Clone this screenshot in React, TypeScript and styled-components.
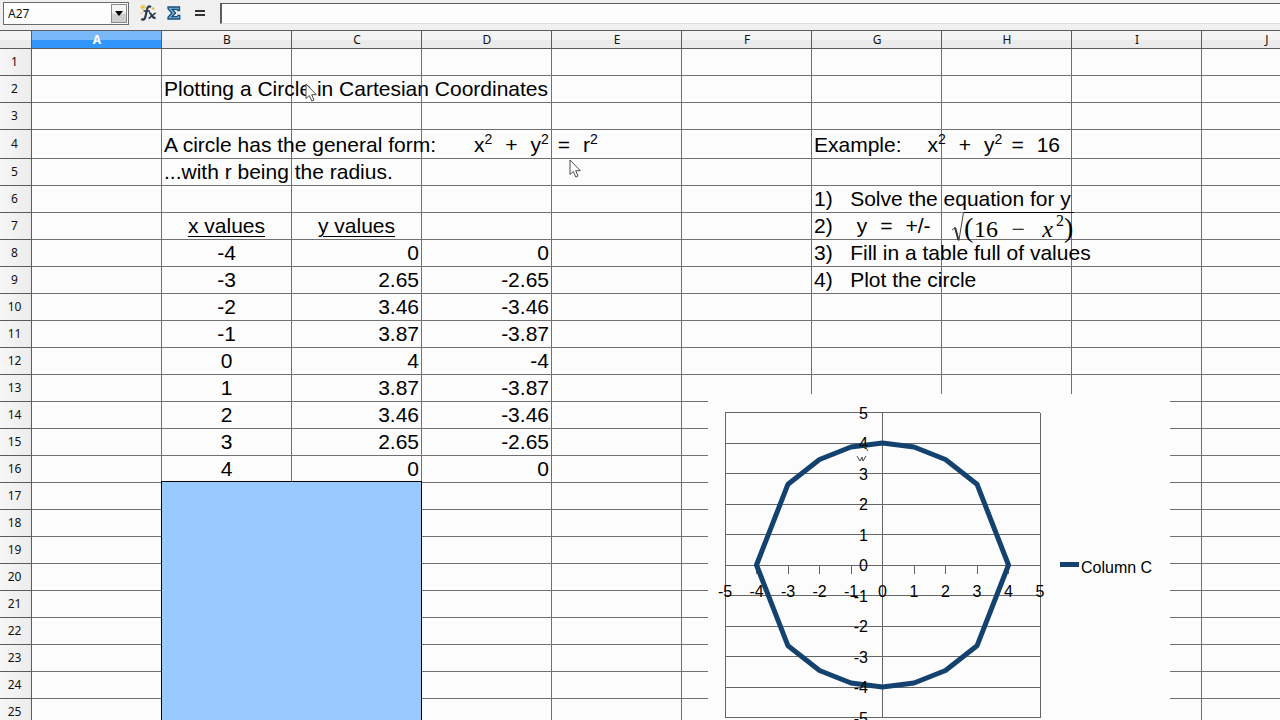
import React from "react";
import styled, { createGlobalStyle, css } from "styled-components";

const GlobalStyle = createGlobalStyle`
  *, *::before, *::after { box-sizing: border-box; }
  body { margin: 0; background: #fcfcfc; }
`;

const UI_FONT = `"Noto Sans", "Open Sans", sans-serif`;
const CELL_FONT = `"Liberation Sans", Arial, sans-serif`;
const FORMULA_FONT = `"Liberation Serif", "Times New Roman", serif`;
const GRID = "#707070";
const EDGE = "#5c5c5c";

const Page = styled.div`
  display: flex;
  flex-direction: column;
  height: 100vh;
  overflow: hidden;
  color: #000;
`;

const FormulaBar = styled.div`
  display: flex;
  align-items: flex-start;
  flex: none;
  height: 31px;
  padding: 2px 0 0 3px;
  background: #f0f0f0;
  border-bottom: 1px solid ${EDGE};
`;

const NameBox = styled.div`
  display: flex;
  width: 126px;
  height: 23px;
  padding: 1px;
  background: #fdfdfd;
  border: 1px solid #6a6a6a;
`;

const NameInput = styled.input`
  flex: 1;
  min-width: 0;
  padding: 0 3px;
  border: 0;
  outline: 0;
  background: transparent;
  font: 12px ${UI_FONT};
  color: #111;
`;

const DropButton = styled.button`
  display: grid;
  place-items: center;
  width: 16px;
  padding: 0;
  border: 1px solid #8a8a8a;
  background: linear-gradient(#f4f4f4 45%, #cfcfcf 55%);
`;

const Tools = styled.div`
  display: flex;
  gap: 6px;
  margin: 1px 0 0 9px;
`;

const ToolButton = styled.button`
  display: grid;
  place-items: center;
  width: 20px;
  height: 20px;
  padding: 0;
  border: 0;
  background: transparent;
`;

const FormulaInput = styled.input`
  flex: 1;
  min-width: 0;
  height: 21px;
  margin: 1px 0 0 10px;
  padding: 0 4px;
  border: solid #5c5c5c;
  border-width: 1px 0 1px 2px;
  border-bottom-color: #dcdcdc;
  outline: 0;
  background: #fdfdfd;
  font: 12px ${UI_FONT};
`;

const Sheet = styled.main`
  position: relative;
  flex: 1;
  min-height: 0;
  overflow: hidden;
  background: #fcfcfc;
`;

const Grid = styled.table`
  width: max(100%, 1332px);
  table-layout: fixed;
  border-collapse: separate;
  border-spacing: 0;
`;

const RowHeaderCol = styled.col`
  width: 32px;
`;

const DataCol = styled.col`
  width: 130px;
`;

const ColumnHeader = styled.th<{ $selected?: boolean }>`
  height: 18px;
  padding: 0 0 0 1px;
  border: solid ${EDGE};
  border-width: 0 1px 1px 0;
  background: linear-gradient(#f4f4f4 55%, #ebebeb 55%);
  font: 12px/16px ${UI_FONT};
  color: #111;
  ${(p) =>
    p.$selected &&
    css`
      background: linear-gradient(#78baf9 55%, #3096fb 55%);
      font-weight: 700;
      color: #fff;
    `}
`;

const RowHeader = styled.th`
  padding: 0 2px 0 0;
  border: solid ${EDGE};
  border-width: 0 1px 1px 0;
  background: linear-gradient(90deg, #f6f6f6, #ececec);
  font: 12px/16px ${UI_FONT};
  color: #111;
`;

const Row = styled.tr<{ $tall?: boolean }>`
  height: ${(p) => (p.$tall ? 29 : 27)}px;
`;

const Cell = styled.td<{ $align?: "left" | "center" | "right"; $underline?: boolean }>`
  padding: 0 2px;
  border: solid ${GRID};
  border-width: 0 1px 1px 0;
  vertical-align: bottom;
  font: 21px/26px ${CELL_FONT};
  text-align: ${(p) => p.$align ?? "left"};
  text-decoration: ${(p) => (p.$underline ? "underline" : "none")};
  text-decoration-thickness: 1px;
  text-underline-offset: 3px;
  white-space: pre;
`;

const Line = styled.div`
  display: flex;
  height: 26px;
`;

const Term = styled.span<{ $lead: number }>`
  padding-left: ${(p) => p.$lead}px;
`;

const Sup = styled.sup`
  position: relative;
  top: -8px;
  vertical-align: baseline;
  font-size: 14px;
  line-height: 0;
`;

const Shape = styled.div`
  position: absolute;
  left: 161px;
  top: 450px;
  width: 261px;
  height: 320px;
  background: #99caff;
  border: 1px solid #000;
`;

const RootFormula = styled.div`
  position: absolute;
  left: 951px;
  top: 181px;
  display: flex;
  height: 36px;
  font: 24px/30px ${FORMULA_FONT};
`;

const Radicand = styled.span`
  display: flex;
  align-items: baseline;
  width: 110px;
  border-top: 1px solid #000;
`;

const FormulaPart = styled.span<{ $width: number; $italic?: boolean }>`
  width: ${(p) => p.$width}px;
  font-style: ${(p) => (p.$italic ? "italic" : "normal")};
`;

const Paren = styled.span`
  width: 10px;
  font-size: 28px;
`;

const Exponent = styled.span`
  align-self: flex-start;
  width: 8px;
  font-size: 16px;
  line-height: 16px;
`;

const ChartFrame = styled.figure`
  position: absolute;
  left: 708px;
  top: 363px;
  width: 462px;
  height: 340px;
  margin: 0;
  background: #fcfcfc;
  font: 16px ${CELL_FONT};
`;

const Pointer = styled.svg<{ $x: number; $y: number }>`
  position: absolute;
  left: ${(p) => p.$x}px;
  top: ${(p) => p.$y}px;
`;

const columns = ["A", "B", "C", "D", "E", "F", "G", "H", "I", "J"];

type TermSpec = { text: string; power?: string; lead?: number };

function Expression({ terms }: { terms: TermSpec[] }) {
  return (
    <Line>
      {terms.map((t, i) => (
        <Term key={i} $lead={t.lead ?? 13}>
          {t.text}
          {t.power && <Sup>{t.power}</Sup>}
        </Term>
      ))}
    </Line>
  );
}

type CellSpec = { content: React.ReactNode; align?: "left" | "center" | "right"; underline?: boolean };

const cells: Record<string, CellSpec> = {
  B2: { content: "Plotting a Circle in Cartesian Coordinates" },
  B4: {
    content: (
      <Expression
        terms={[
          { text: "A circle has the general form:", lead: 0 },
          { text: "x", power: "2", lead: 38 },
          { text: "+" },
          { text: "y", power: "2" },
          { text: "=", lead: 9 },
          { text: "r", power: "2" },
        ]}
      />
    ),
  },
  G4: {
    content: (
      <Expression
        terms={[
          { text: "Example:", lead: 0 },
          { text: "x", power: "2", lead: 26 },
          { text: "+" },
          { text: "y", power: "2" },
          { text: "=", lead: 9 },
          { text: "16" },
        ]}
      />
    ),
  },
  B5: { content: "...with r being the radius." },
  G6: { content: "1)   Solve the equation for y" },
  G7: {
    content: (
      <Expression
        terms={[{ text: "2)", lead: 0 }, { text: "y", lead: 24 }, { text: "=" }, { text: "+/-" }]}
      />
    ),
  },
  G8: { content: "3)   Fill in a table full of values" },
  G9: { content: "4)   Plot the circle" },
  B7: { content: "x values", align: "center", underline: true },
  C7: { content: "y values", align: "center", underline: true },
};

const halfCircle = ["0", "2.65", "3.46", "3.87", "4", "3.87", "3.46", "2.65", "0"];
halfCircle.forEach((y, i) => {
  const row = 8 + i;
  cells[`B${row}`] = { content: String(i - 4), align: "center" };
  cells[`C${row}`] = { content: y, align: "right" };
  cells[`D${row}`] = { content: y === "0" ? y : `-${y}`, align: "right" };
});

const rows = Array.from({ length: 25 }, (_, i) => i + 1);

/* Chart space: the origin sits at (174.5, 171) in the frame. */
const px = (x: number) => 174.5 + x * 31.5;
const py = (y: number) => 171 - y * 30.5;
const units = Array.from({ length: 11 }, (_, i) => i - 5);
const upper = halfCircle.map((y, i) => [i - 4, Number(y)]);
const lower = upper.map(([x, y]) => [x, -y]).reverse();
const outline = [...upper, ...lower].map(([x, y]) => `${px(x)},${py(y)}`).join(" ");

function CircleChart() {
  return (
    <ChartFrame>
      <svg width="462" height="340" role="img" aria-label="Circle of radius 4">
        <g stroke="#666" strokeWidth="1" shapeRendering="crispEdges">
          {units.map((u) => (
            <line key={u} x1={px(-5)} x2={px(5)} y1={py(u)} y2={py(u)} />
          ))}
          {units.map((u) => (
            <line key={u} x1={px(u)} x2={px(u)} y1={py(0)} y2={py(0) + 9} />
          ))}
          {[-5, 0, 5].map((u) => (
            <line key={u} x1={px(u)} x2={px(u)} y1={py(5)} y2={py(-5)} />
          ))}
        </g>
        <polygon points={outline} fill="none" stroke="#14426f" strokeWidth="5" strokeLinejoin="round" />
        <g fill="#000">
          {units.map((u) => (
            <text key={u} x="160" y={py(u) + 6} textAnchor="end">
              {u}
            </text>
          ))}
          {units.map((u) => (
            <text key={u} x={px(u)} y="203" textAnchor="middle">
              {u}
            </text>
          ))}
          <text x="373" y="179">
            Column C
          </text>
        </g>
        <rect x="352" y="168" width="19" height="5" fill="#14426f" />
        <path d="M156 51 L160 57 M149 62 L152 67 L154 63 L155 67 L158 62" fill="none" stroke="#444" />
      </svg>
    </ChartFrame>
  );
}

function ArrowPointer({ x, y }: { x: number; y: number }) {
  return (
    <Pointer $x={x} $y={y} width="13" height="20" viewBox="0 0 13 20" aria-hidden="true">
      <path
        d="M1 1 V15.5 L4.3 12.5 L6.8 18 L9 17 L6.7 11.7 H11.3 Z"
        fill="#fff"
        stroke="#4a4a4a"
        strokeWidth="1"
      />
    </Pointer>
  );
}

export default function App() {
  return (
    <Page>
      <GlobalStyle />
      <FormulaBar>
        <NameBox>
          <NameInput aria-label="Name box" defaultValue="A27" />
          <DropButton aria-label="Open name list">
            <svg width="8" height="5" viewBox="0 0 8 5">
              <path d="M0 0 H8 L4 5 Z" fill="#000" />
            </svg>
          </DropButton>
        </NameBox>
        <Tools>
          <ToolButton aria-label="Function wizard">
            <svg width="18" height="18" viewBox="0 0 18 18" fill="none">
              <path d="M12 3.2 C9.5 1.2 8.4 3 7.9 6 L6.6 12 C6 15.2 4.4 16.4 2.2 15" stroke="#2b3a4e" strokeWidth="2.2" />
              <path d="M4.5 7 H11" stroke="#2b3a4e" strokeWidth="1.6" />
              <path d="M10 8.8 C12.6 8 12.4 15 16.6 13.8" stroke="#2b3a4e" strokeWidth="2.1" />
              <path d="M16.6 8.8 L9.6 14.6" stroke="#2b3a4e" strokeWidth="1.5" />
              <path d="M4 0.5 V6 M1 3.2 H7 M2 1.2 L6 5.2 M6 1.2 L2 5.2" stroke="#ecc32e" strokeWidth="1" />
              <path d="M14 3 V6 M12.5 4.5 H15.5 M1.5 9 H3.5" stroke="#e3b94a" strokeWidth="1.2" />
            </svg>
          </ToolButton>
          <ToolButton aria-label="Sum">
            <svg width="14" height="14" viewBox="0 0 14 14">
              <path
                d="M1 1 H12.5 V4.5 H10.8 L10 3.3 H5.3 L8.6 7 L5 10.7 H10.2 L11 9.3 H12.8 V13 H1 V11.2 L4.8 7 L1 2.8 Z"
                fill="#6fb4dc"
                stroke="#1d4e78"
                strokeWidth="1.3"
              />
            </svg>
          </ToolButton>
          <ToolButton aria-label="Function">
            <svg width="12" height="8" viewBox="0 0 12 8">
              <path d="M1 2 H11 M1 6 H11" stroke="#333" strokeWidth="2" />
            </svg>
          </ToolButton>
        </Tools>
        <FormulaInput aria-label="Formula" />
      </FormulaBar>
      <Sheet>
        <Grid>
          <colgroup>
            <RowHeaderCol />
            {columns.slice(0, -1).map((c) => (
              <DataCol key={c} />
            ))}
            <col />
          </colgroup>
          <thead>
            <tr>
              <ColumnHeader aria-label="Select all" />
              {columns.map((c) => (
                <ColumnHeader key={c} scope="col" $selected={c === "A"}>
                  {c}
                </ColumnHeader>
              ))}
            </tr>
          </thead>
          <tbody>
            {rows.map((r) => (
              <Row key={r} $tall={r === 4}>
                <RowHeader scope="row">{r}</RowHeader>
                {columns.map((c) => {
                  const cell = cells[`${c}${r}`];
                  return (
                    <Cell key={c} $align={cell?.align} $underline={cell?.underline}>
                      {cell?.content}
                    </Cell>
                  );
                })}
              </Row>
            ))}
          </tbody>
        </Grid>
        <Shape />
        <RootFormula>
          <svg width="13" height="32" viewBox="0 0 13 32" fill="none" aria-hidden="true">
            <path d="M1 18 L4 15.5" stroke="#444" />
            <path d="M4 15.5 L7.5 28" stroke="#333" strokeWidth="2" />
            <path d="M7.8 29 L12.5 0.5" stroke="#444" />
          </svg>
          <Radicand>
            <Paren>(</Paren>
            <FormulaPart $width={38}>16</FormulaPart>
            <FormulaPart $width={31}>−</FormulaPart>
            <FormulaPart $width={14} $italic>
              x
            </FormulaPart>
            <Exponent>2</Exponent>
            <Paren>)</Paren>
          </Radicand>
        </RootFormula>
        <CircleChart />
        <ArrowPointer x={305} y={52} />
        <ArrowPointer x={569} y={128} />
      </Sheet>
    </Page>
  );
}
